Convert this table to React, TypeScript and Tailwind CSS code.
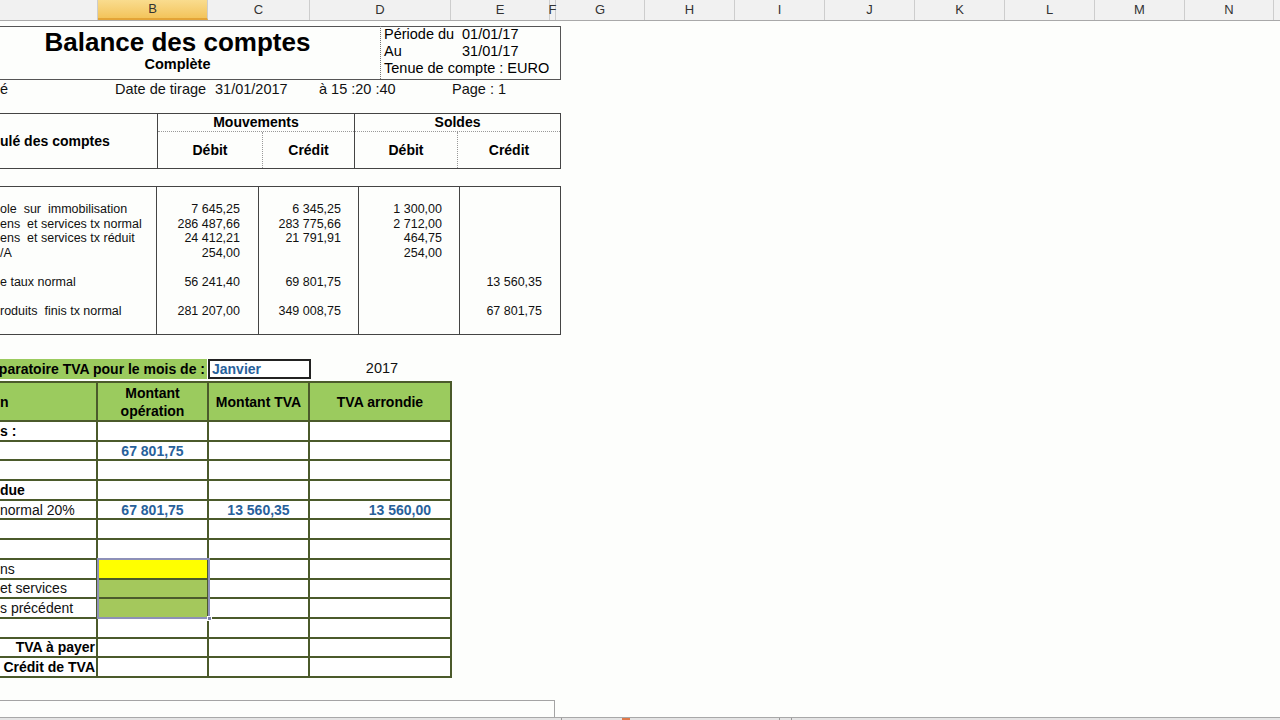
const cols = [
  { l: '', w: 98 },
  { l: 'B', w: 110, active: true },
  { l: 'C', w: 102 },
  { l: 'D', w: 141 },
  { l: 'E', w: 99 },
  { l: 'F', w: 6 },
  { l: 'G', w: 89 },
  { l: 'H', w: 90 },
  { l: 'I', w: 90 },
  { l: 'J', w: 90 },
  { l: 'K', w: 90 },
  { l: 'L', w: 90 },
  { l: 'M', w: 90 },
  { l: 'N', w: 89 },
  { l: '', w: 40 },
];

const bodyRows = [
  { t: 'ole  sur  immobilisation', v: ['7 645,25', '6 345,25', '1 300,00', ''] },
  { t: 'ens  et services tx normal', v: ['286 487,66', '283 775,66', '2 712,00', ''] },
  { t: 'ens  et services tx réduit', v: ['24 412,21', '21 791,91', '464,75', ''] },
  { t: '/A', v: ['254,00', '', '254,00', ''] },
  { t: '', v: ['', '', '', ''] },
  { t: 'e taux normal', v: ['56 241,40', '69 801,75', '', '13 560,35'] },
  { t: '', v: ['', '', '', ''] },
  { t: 'roduits  finis tx normal', v: ['281 207,00', '349 008,75', '', '67 801,75'] },
];

interface GRow {
  a?: string;
  bold?: boolean;
  right?: boolean;
  b?: string;
  c?: string;
  d?: string;
  bBg?: string;
}

const greenRows: GRow[] = [
  { a: 's :', bold: true },
  { b: '67 801,75' },
  {},
  { a: 'due', bold: true },
  { a: 'normal 20%', b: '67 801,75', c: '13 560,35', d: '13 560,00' },
  {},
  {},
  { a: 'ns', bBg: 'bg-[#ffff00]' },
  { a: 'et services', bBg: 'bg-[#a4c85c]' },
  { a: 's précédent', bBg: 'bg-[#a4c85c]' },
  {},
  { a: 'TVA à payer', bold: true, right: true },
  { a: 'Crédit de TVA', bold: true, right: true },
];

export default function App() {
  return (
    <div className="w-[1280px] h-[720px] overflow-hidden bg-[#fdfefc] text-black font-['Liberation_Sans',Arial,sans-serif]">
      {/* column headers */}
      <div className="flex h-[21px] bg-[#f1f1f1] border-b border-[#a9a9a9]">
        {cols.map((c, i) => (
          <div
            key={i}
            style={{ width: c.w }}
            className={`shrink-0 flex items-center justify-center text-[13px] text-[#333] border-r border-[#cdcdcd] ${
              c.active ? 'bg-gradient-to-b from-[#f9dc8e] to-[#f3c45a] border-b-2 border-b-[#e3a437]' : ''
            }`}
          >
            {c.l}
          </div>
        ))}
      </div>

      {/* title box */}
      <div className="mt-[5px] flex w-[561px] h-[54px] border border-l-0 border-[#555]">
        <div className="w-[355px] flex flex-col items-center">
          <div className="text-[26px] font-bold leading-[30px]">Balance des comptes</div>
          <div className="text-[14.5px] font-bold leading-[16px] mt-[-1px]">Complète</div>
        </div>
        <div className="w-[25px]" />
        <div className="border-l border-dotted border-[#777] pl-[3px] mt-[-1px] text-[14.5px] leading-[17px] whitespace-nowrap">
          <div className="flex"><span className="w-[78px]">Période du</span><span>01/01/17</span></div>
          <div className="flex"><span className="w-[78px]">Au</span><span>31/01/17</span></div>
          <div>Tenue de compte : EURO</div>
        </div>
      </div>

      {/* print info */}
      <div className="flex h-[20px] items-center text-[14.5px] text-[#111] whitespace-nowrap">
        <span className="w-[115px]">é</span>
        <span className="w-[100px]">Date de tirage</span>
        <span className="w-[104px]">31/01/2017</span>
        <span className="w-[133px]">à 15 :20 :40</span>
        <span>Page : 1</span>
      </div>

      {/* table header */}
      <div className="mt-[13px] flex w-[561px] h-[56px] border border-l-0 border-[#444] text-[14px] font-bold">
        <div className="w-[157px] flex items-center pt-[1px]">ulé des comptes</div>
        {['Mouvements', 'Soldes'].map((g, gi) => (
          <div
            key={g}
            className={`flex flex-col border-l border-[#444] ${gi === 0 ? 'w-[197px]' : 'flex-1'}`}
          >
            <div className="h-[18px] flex items-center justify-center border-b border-dotted border-[#999]">{g}</div>
            <div className="flex-1 flex">
              <div className={`${gi === 0 ? 'w-[105px]' : 'w-[103px]'} flex items-center justify-center border-r border-dotted border-[#999]`}>Débit</div>
              <div className="flex-1 flex items-center justify-center">Crédit</div>
            </div>
          </div>
        ))}
      </div>

      {/* table body */}
      <div className="mt-[17px] flex w-[561px] h-[149px] border border-l-0 border-[#444] text-[12.5px] text-[#111]">
        <div className="w-[156px] pt-[15px]">
          {bodyRows.map((r, i) => (
            <div key={i} className="h-[14.6px] leading-[14.6px] whitespace-pre">{r.t}</div>
          ))}
        </div>
        {[
          { w: 'w-[102px]', pr: 'pr-[18px]' },
          { w: 'w-[100px]', pr: 'pr-[17px]' },
          { w: 'w-[101px]', pr: 'pr-[17px]' },
          { w: 'flex-1', pr: 'pr-[18px]' },
        ].map((c, ci) => (
          <div key={ci} className={`${c.w} ${c.pr} border-l border-[#444] pt-[15px] text-right`}>
            {bodyRows.map((r, i) => (
              <div key={i} className="h-[14.6px] leading-[14.6px]">{r.v[ci]}</div>
            ))}
          </div>
        ))}
      </div>

      {/* TVA section title */}
      <div className="mt-[24px] flex h-[20px] items-stretch text-[14px]">
        <div className="w-[207px] bg-[#9bcb5e] font-bold flex items-center justify-end pr-[2px] overflow-hidden whitespace-nowrap">
          paratoire TVA pour le mois de :
        </div>
        <div className="w-[103px] ml-[1px] border-2 border-[#222] bg-white font-bold text-[#28619b] flex items-center pl-[2px]">
          Janvier
        </div>
        <div className="w-[142px] flex items-center justify-center text-[14.5px] text-[#111]">2017</div>
      </div>

      {/* TVA table */}
      <div className="relative mt-[2px] w-[452px] border-t-2 border-[#4b5a2b] text-[14px]">
        <div className="flex h-[39px] bg-[#9bcb5e] font-bold border-b-2 border-[#4b5a2b] leading-[18px]">
          <div className="w-[98px] border-r-2 border-[#4b5a2b] flex items-center">n</div>
          <div className="w-[111px] border-r-2 border-[#4b5a2b] flex items-center justify-center text-center pt-[1px]">
            Montant<br />opération
          </div>
          <div className="w-[101px] border-r-2 border-[#4b5a2b] flex items-center justify-center whitespace-nowrap">Montant TVA</div>
          <div className="w-[142px] border-r-2 border-[#4b5a2b] flex items-center justify-center">TVA arrondie</div>
        </div>
        {greenRows.map((r, i) => (
          <div key={i} className="flex h-[19.7px] border-b-2 border-[#4b5a2b] bg-white">
            <div
              className={`w-[98px] pt-[1px] border-r-2 border-[#4b5a2b] flex items-center whitespace-nowrap overflow-hidden ${
                r.bold ? 'font-bold' : 'text-[#111]'
              } ${r.right ? 'justify-end pr-[1px]' : ''}`}
            >
              {r.a}
            </div>
            <div className={`w-[111px] pt-[1px] border-r-2 border-[#4b5a2b] flex items-center justify-center font-bold text-[#28619b] ${r.bBg ?? ''}`}>
              {r.b}
            </div>
            <div className="w-[101px] pt-[1px] border-r-2 border-[#4b5a2b] flex items-center justify-center font-bold text-[#28619b]">
              {r.c}
            </div>
            <div className="w-[142px] pt-[1px] border-r-2 border-[#4b5a2b] flex items-center justify-end pr-[19px] font-bold text-[#28619b]">
              {r.d}
            </div>
          </div>
        ))}
        {/* selection */}
        <div className="absolute left-[97px] top-[175px] w-[113px] h-[61px] border-2 border-[#8d90b8]" />
        <div className="absolute left-[207px] top-[233px] w-[5px] h-[5px] bg-[#7d80a8] border border-white" />
      </div>

      {/* bottom bars */}
      <div className="mt-[22px] flex">
        <div className="w-[555px] h-[17px] border-t border-r border-[#a4a4a4]" />
      </div>
      <div className="flex h-[4px] bg-[#e4e4e4] border-t border-[#a8a8a8]">
        <div className="w-[562px] border-r border-[#999]" />
        <div className="w-[60px]" />
        <div className="w-[8px] bg-[#e07a4a]" />
        <div className="w-[150px] border-r border-[#999]" />
        <div className="w-[12px] border-r border-[#999]" />
      </div>
    </div>
  );
}
